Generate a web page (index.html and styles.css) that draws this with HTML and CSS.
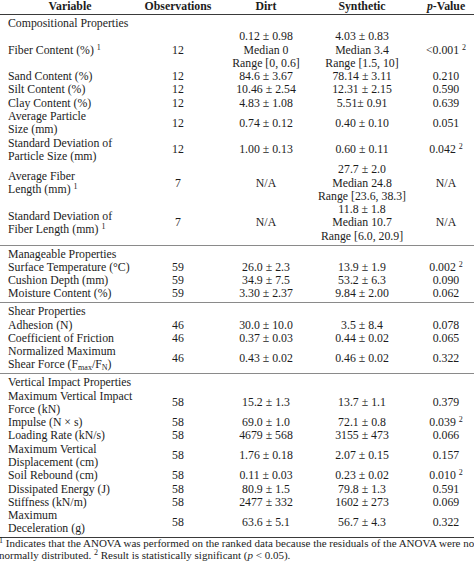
FILE: index.html
```html
<!DOCTYPE html>
<html>
<head>
<meta charset="utf-8">
<link rel="stylesheet" href="styles.css">
</head>
<body>
<table class="data">
  <colgroup>
    <col class="c-var"><col class="c-obs"><col class="c-dirt"><col class="c-syn"><col class="c-p">
  </colgroup>
  <thead>
    <tr>
      <th class="var-h">Variable</th>
      <th>Observations</th>
      <th>Dirt</th>
      <th>Synthetic</th>
      <th><i>p</i>-Value</th>
    </tr>
  </thead>
  <tbody class="sec first">
    <tr class="top"><td class="var">Compositional Properties</td><td></td><td></td><td></td><td></td></tr>
    <tr><td class="var">Fiber Content (%) <sup>1</sup></td><td>12</td><td>0.12 ± 0.98<br>Median 0<br>Range [0, 0.6]</td><td>4.03 ± 0.83<br>Median 3.4<br>Range [1.5, 10]</td><td>&lt;0.001 <sup>2</sup></td></tr>
    <tr><td class="var">Sand Content (%)</td><td>12</td><td>84.6 ± 3.67</td><td>78.14 ± 3.11</td><td>0.210</td></tr>
    <tr><td class="var">Silt Content (%)</td><td>12</td><td>10.46 ± 2.54</td><td>12.31 ± 2.15</td><td>0.590</td></tr>
    <tr><td class="var">Clay Content (%)</td><td>12</td><td>4.83 ± 1.08</td><td>5.51± 0.91</td><td>0.639</td></tr>
    <tr><td class="var">Average Particle<br>Size (mm)</td><td>12</td><td>0.74 ± 0.12</td><td>0.40 ± 0.10</td><td>0.051</td></tr>
    <tr><td class="var">Standard Deviation of<br>Particle Size (mm)</td><td>12</td><td>1.00 ± 0.13</td><td>0.60 ± 0.11</td><td>0.042 <sup>2</sup></td></tr>
    <tr><td class="var">Average Fiber<br>Length (mm) <sup>1</sup></td><td>7</td><td>N/A</td><td>27.7 ± 2.0<br>Median 24.8<br>Range [23.6, 38.3]</td><td>N/A</td></tr>
    <tr class="bottom"><td class="var">Standard Deviation of<br>Fiber Length (mm) <sup>1</sup></td><td>7</td><td>N/A</td><td>11.8 ± 1.8<br>Median 10.7<br>Range [6.0, 20.9]</td><td>N/A</td></tr>
  </tbody>
  <tbody class="sec">
    <tr class="top"><td class="var">Manageable Properties</td><td></td><td></td><td></td><td></td></tr>
    <tr><td class="var">Surface Temperature (°C)</td><td>59</td><td>26.0 ± 2.3</td><td>13.9 ± 1.9</td><td>0.002 <sup>2</sup></td></tr>
    <tr><td class="var">Cushion Depth (mm)</td><td>59</td><td>34.9 ± 7.5</td><td>53.2 ± 6.3</td><td>0.090</td></tr>
    <tr class="bottom"><td class="var">Moisture Content (%)</td><td>59</td><td>3.30 ± 2.37</td><td>9.84 ± 2.00</td><td>0.062</td></tr>
  </tbody>
  <tbody class="sec">
    <tr class="top"><td class="var">Shear Properties</td><td></td><td></td><td></td><td></td></tr>
    <tr><td class="var">Adhesion (N)</td><td>46</td><td>30.0 ± 10.0</td><td>3.5 ± 8.4</td><td>0.078</td></tr>
    <tr><td class="var">Coefficient of Friction</td><td>46</td><td>0.37 ± 0.03</td><td>0.44 ± 0.02</td><td>0.065</td></tr>
    <tr class="bottom"><td class="var">Normalized Maximum<br>Shear Force (F<sub>max</sub>/F<sub>N</sub>)</td><td>46</td><td>0.43 ± 0.02</td><td>0.46 ± 0.02</td><td>0.322</td></tr>
  </tbody>
  <tbody class="sec last">
    <tr class="top"><td class="var">Vertical Impact Properties</td><td></td><td></td><td></td><td></td></tr>
    <tr><td class="var">Maximum Vertical Impact<br>Force (kN)</td><td>58</td><td>15.2 ± 1.3</td><td>13.7 ± 1.1</td><td>0.379</td></tr>
    <tr><td class="var">Impulse (N × s)</td><td>58</td><td>69.0 ± 1.0</td><td>72.1 ± 0.8</td><td>0.039 <sup>2</sup></td></tr>
    <tr><td class="var">Loading Rate (kN/s)</td><td>58</td><td>4679 ± 568</td><td>3155 ± 473</td><td>0.066</td></tr>
    <tr><td class="var">Maximum Vertical<br>Displacement (cm)</td><td>58</td><td>1.76 ± 0.18</td><td>2.07 ± 0.15</td><td>0.157</td></tr>
    <tr><td class="var">Soil Rebound (cm)</td><td>58</td><td>0.11 ± 0.03</td><td>0.23 ± 0.02</td><td>0.010 <sup>2</sup></td></tr>
    <tr><td class="var">Dissipated Energy (J)</td><td>58</td><td>80.9 ± 1.5</td><td>79.8 ± 1.3</td><td>0.591</td></tr>
    <tr><td class="var">Stiffness (kN/m)</td><td>58</td><td>2477 ± 332</td><td>1602 ± 273</td><td>0.069</td></tr>
    <tr class="bottom"><td class="var">Maximum<br>Deceleration (g)</td><td>58</td><td>63.6 ± 5.1</td><td>56.7 ± 4.3</td><td>0.322</td></tr>
  </tbody>
</table>
<p class="notes"><sup>1</sup> Indicates that the ANOVA was performed on the ranked data because the residuals of the ANOVA were not<br>normally distributed. <sup>2</sup> Result is statistically significant (<i>p</i> &lt; 0.05).</p>
</body>
</html>
```

FILE: styles.css
```css
html, body {
  margin: 0;
  padding: 0;
  background: #ffffff;
  overflow: hidden;
}

body {
  width: 474px;
  height: 565px;
  font-family: "Liberation Serif", "Times New Roman", serif;
  color: #1c1c1c;
}

.data {
  width: 484px;
  table-layout: fixed;
  border-collapse: collapse;
  font-size: 11.8px;
  line-height: 13.3px;
}

.c-var { width: 140px; }
.c-obs { width: 76px; }
.c-dirt { width: 100px; }
.c-syn { width: 92px; }
.c-p { width: 76px; }

.data th {
  font-weight: bold;
  text-align: center;
  line-height: 13px;
  padding: 0 0 1px 0;
  white-space: nowrap;
}

.data th.var-h {
  padding-left: 8px;
  padding-right: 8px;
}

.data thead tr {
  border-bottom: 1.5px solid #3a3a3a;
}

.data td {
  padding: 0;
  text-align: center;
  vertical-align: middle;
  white-space: nowrap;
}

.data td.var {
  text-align: left;
  padding-left: 8px;
}

.sec {
  border-top: 1px solid #8a8a8a;
}

.sec.first {
  border-top: 1.5px solid #3a3a3a;
}

.sec.last {
  border-bottom: 1.5px solid #3a3a3a;
}

.sec tr.top td {
  padding-top: 2px;
}

.sec tr.bottom td {
  padding-bottom: 1.5px;
}

sup {
  font-size: 8px;
  line-height: 0;
  vertical-align: 0.5em;
}

sub {
  font-size: 8px;
  line-height: 0;
  vertical-align: -0.25em;
}

.notes {
  margin: 0 0 0 -1px;
  font-size: 11px;
  line-height: 11.5px;
  white-space: nowrap;
}
```
